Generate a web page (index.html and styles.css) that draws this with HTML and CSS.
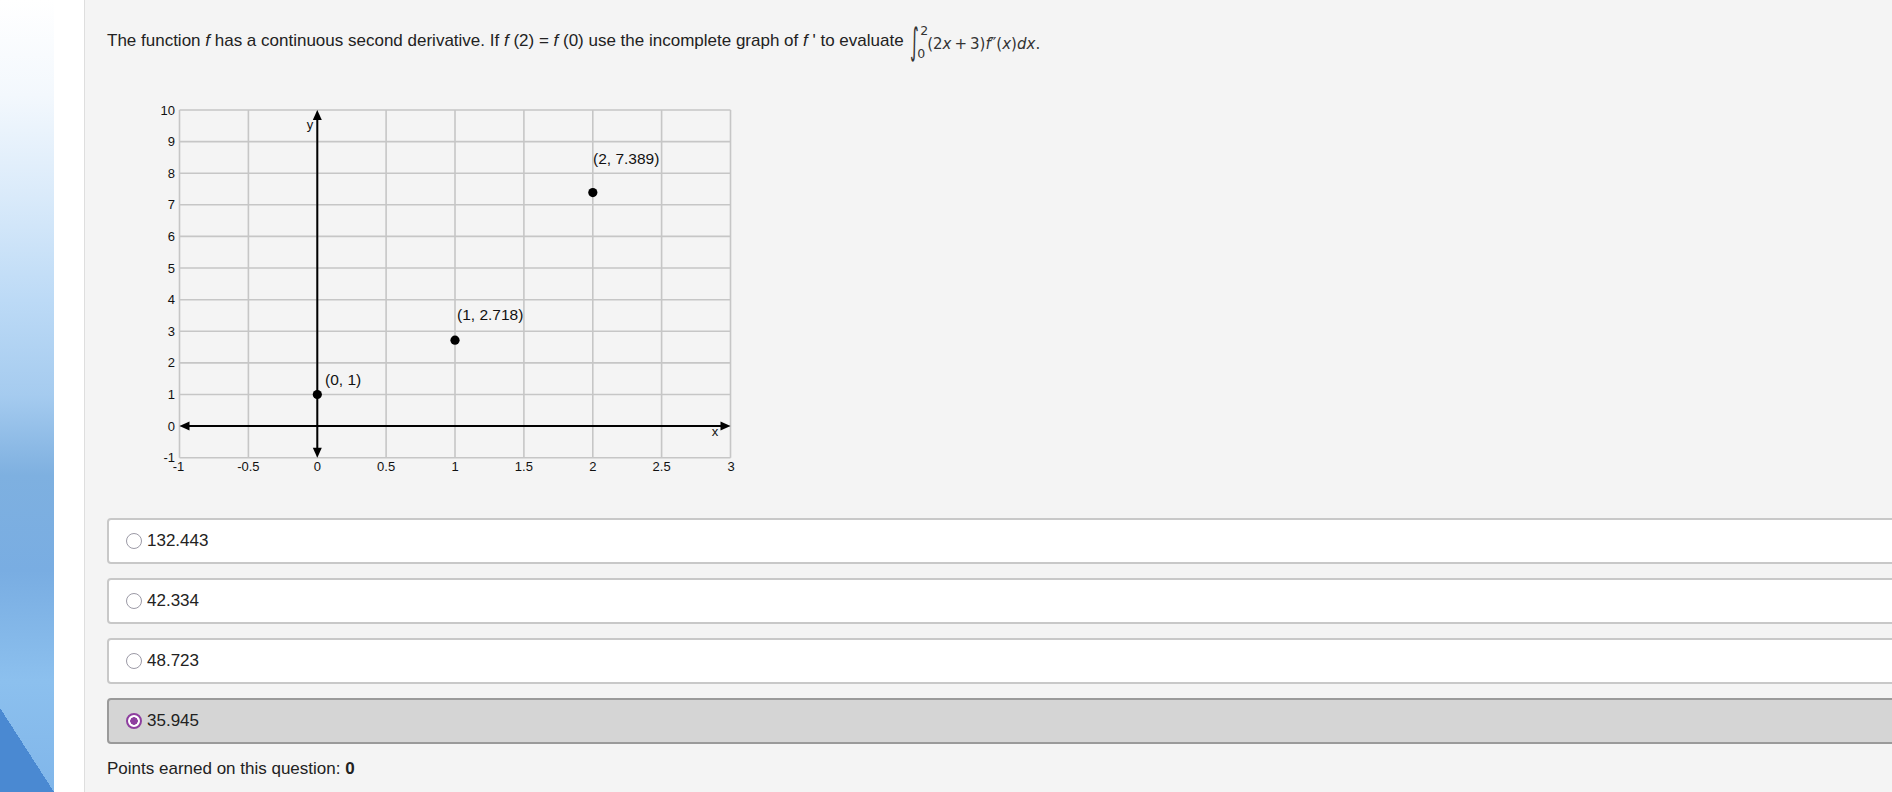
FILE: index.html
```html
<!DOCTYPE html>
<html>
  <head>
    <title>Question</title>
    <link rel="stylesheet" href="styles.css">
  </head>
  <body>
    <div class="sidebar"></div>
    <div class="gutter"></div>

    <div class="main">
      <p class="question">
        The function <i>f</i> has a continuous second derivative. If <i>f</i> (2) = <i>f</i> (0) use the incomplete graph of <i>f</i> ' to evaluate
        <span class="math"><span class="int">&#8747;</span><sub>0</sub><sup>2</sup>(2<i>x</i>&#8201;+&#8201;3)<i>f</i>&#8243;(<i>x</i>)<i>dx</i>.</span>
      </p>

      <svg class="graph" width="660" height="420" viewBox="107 70 660 420">
        <!-- grid -->
        <g class="grid">
          <line x1="179.5" y1="110" x2="179.5" y2="457.7"/>
          <line x1="248.4" y1="110" x2="248.4" y2="457.7"/>
          <line x1="317.3" y1="110" x2="317.3" y2="457.7"/>
          <line x1="386.1" y1="110" x2="386.1" y2="457.7"/>
          <line x1="455" y1="110" x2="455" y2="457.7"/>
          <line x1="523.9" y1="110" x2="523.9" y2="457.7"/>
          <line x1="592.8" y1="110" x2="592.8" y2="457.7"/>
          <line x1="661.6" y1="110" x2="661.6" y2="457.7"/>
          <line x1="730.5" y1="110" x2="730.5" y2="457.7"/>
          <line x1="179.5" y1="110" x2="730.5" y2="110"/>
          <line x1="179.5" y1="141.6" x2="730.5" y2="141.6"/>
          <line x1="179.5" y1="173.2" x2="730.5" y2="173.2"/>
          <line x1="179.5" y1="204.8" x2="730.5" y2="204.8"/>
          <line x1="179.5" y1="236.4" x2="730.5" y2="236.4"/>
          <line x1="179.5" y1="268" x2="730.5" y2="268"/>
          <line x1="179.5" y1="299.7" x2="730.5" y2="299.7"/>
          <line x1="179.5" y1="331.3" x2="730.5" y2="331.3"/>
          <line x1="179.5" y1="362.9" x2="730.5" y2="362.9"/>
          <line x1="179.5" y1="394.5" x2="730.5" y2="394.5"/>
          <line x1="179.5" y1="426.1" x2="730.5" y2="426.1"/>
          <line x1="179.5" y1="457.7" x2="730.5" y2="457.7"/>
        </g>

        <!-- axes -->
        <g class="axis">
          <line x1="188" y1="426.1" x2="722" y2="426.1"/>
          <line x1="317.3" y1="119" x2="317.3" y2="449"/>
        </g>
        <g class="arrow">
          <polygon points="179.5,426.1 189.5,421.6 189.5,430.6"/>
          <polygon points="730.5,426.1 720.5,421.6 720.5,430.6"/>
          <polygon points="317.3,110 312.8,120 321.8,120"/>
          <polygon points="317.3,457.7 312.8,447.7 321.8,447.7"/>
        </g>
        <text class="tick" x="310" y="129" text-anchor="middle">y</text>
        <text class="tick" x="715" y="436" text-anchor="middle">x</text>

        <!-- y ticks -->
        <g class="tick" text-anchor="end">
          <text x="175" y="114.5">10</text>
          <text x="175" y="146.1">9</text>
          <text x="175" y="177.7">8</text>
          <text x="175" y="209.3">7</text>
          <text x="175" y="240.9">6</text>
          <text x="175" y="272.5">5</text>
          <text x="175" y="304.2">4</text>
          <text x="175" y="335.8">3</text>
          <text x="175" y="367.4">2</text>
          <text x="175" y="399">1</text>
          <text x="175" y="430.6">0</text>
          <text x="175" y="462.2">-1</text>
        </g>

        <!-- x ticks -->
        <g class="tick" text-anchor="middle">
          <text x="178.5" y="471">-1</text>
          <text x="248.4" y="471">-0.5</text>
          <text x="317.3" y="471">0</text>
          <text x="386.1" y="471">0.5</text>
          <text x="455" y="471">1</text>
          <text x="523.9" y="471">1.5</text>
          <text x="592.8" y="471">2</text>
          <text x="661.6" y="471">2.5</text>
          <text x="731" y="471">3</text>
        </g>

        <!-- points -->
        <circle class="dot" cx="317.3" cy="394.5" r="4.6"/>
        <circle class="dot" cx="455" cy="340.2" r="4.6"/>
        <circle class="dot" cx="592.8" cy="192.6" r="4.6"/>
        <text class="pt-label" x="325" y="385">(0, 1)</text>
        <text class="pt-label" x="457" y="320">(1, 2.718)</text>
        <text class="pt-label" x="593" y="164">(2, 7.389)</text>
      </svg>

      <div class="choices">
        <label class="choice">
          <span class="radio"></span>132.443
        </label>
        <label class="choice">
          <span class="radio"></span>42.334
        </label>
        <label class="choice">
          <span class="radio"></span>48.723
        </label>
        <label class="choice selected">
          <span class="radio"></span>35.945
        </label>
      </div>

      <p class="points">Points earned on this question: <strong>0</strong></p>
    </div>
  </body>
</html>
```

FILE: styles.css
```css
*,
*:before,
*:after {
  box-sizing: border-box;
}

html,
body {
  margin: 0px;
  padding: 0px;
  height: 100%;
}

body {
  display: flex;
  overflow: hidden;
  font-family: "Liberation Sans", Arial, sans-serif;
  color: #222;
}

.sidebar {
  width: 54px;
  flex: none;
  background:
    linear-gradient(to top right, #4a89d2 50%, transparent 50%) bottom left / 54px 84px no-repeat,
    linear-gradient(to bottom, #ffffff 0%, #f3f8fd 12%, #d9eafa 25%, #bcdaf6 38%, #a5cbef 50%, #7eb0e0 60%, #79ade2 72%, #8cc0ee 86%, #80b6ea 100%);
}

.gutter {
  width: 31px;
  flex: none;
  background: #fff;
  border-right: 1px solid #dedede;
}

.main {
  flex: 1;
  min-width: 0;
  overflow: hidden;
  background: #f4f4f4;
  padding-left: 22px;
}

.question {
  margin: 0px;
  padding: 30px 0px 18px;
  height: 70px;
  font-size: 17px;
  line-height: 22px;
  white-space: nowrap;
}

.math {
  color: #333;
  font-family: "DejaVu Sans", sans-serif;
  font-size: 15px;
  line-height: 0;
  vertical-align: -3px;
  margin-left: 1px;
}

.int {
  display: inline-block;
  font-size: 21px;
  line-height: 0;
  margin-right: -3px;
  transform: scale(0.8, 1.75);
  vertical-align: 0px;
}

.math sub,
.math sup {
  font-size: 12.5px;
  line-height: 0;
}

.math sub {
  vertical-align: -9px;
}

.math sup {
  vertical-align: 14px;
  margin-left: -5px;
  margin-right: -1px;
}

.graph {
  display: block;
}

.grid line {
  stroke: #c6c6c6;
  stroke-width: 1.6;
}

.axis line {
  stroke: #000;
  stroke-width: 2;
}

.arrow polygon,
.dot {
  fill: #000;
}

.tick {
  font-family: "Liberation Sans", Arial, sans-serif;
  font-size: 13px;
  fill: #111;
}

.pt-label {
  font-family: "Liberation Sans", Arial, sans-serif;
  font-size: 15.5px;
  fill: #111;
}

.choices {
  margin: 28px -40px 0px 0px;
}

.choice {
  display: flex;
  align-items: center;
  height: 46px;
  margin-bottom: 14px;
  padding-left: 17px;
  background: #fff;
  border: 2px solid #c8c8c8;
  border-radius: 4px;
  font-size: 17px;
  color: #222;
}

.choice.selected {
  background: #d5d5d5;
  border-color: #9a9a9a;
}

.radio {
  width: 16px;
  height: 16px;
  margin-right: 5px;
  border: 1.5px solid #9c9aa6;
  border-radius: 50%;
  background: #fff;
}

.selected .radio {
  border: 2px solid #8e3f9f;
  background: radial-gradient(circle, #8e3f9f 0 3.5px, #fff 4px);
}

.points {
  margin: 15px 0px 0px;
  font-size: 17px;
  line-height: 20px;
}
```
